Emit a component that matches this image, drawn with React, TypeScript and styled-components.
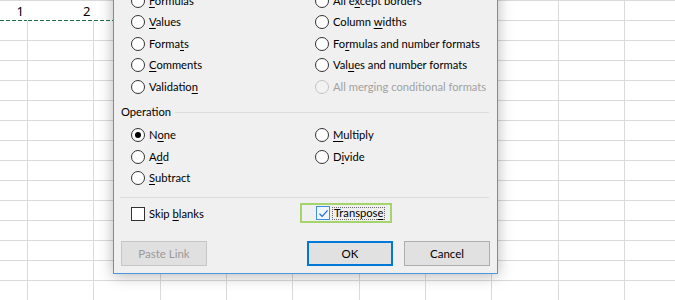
import styled, { createGlobalStyle } from "styled-components";

const GlobalStyle = createGlobalStyle`
  html, body {
    margin: 0;
    padding: 0;
    background: #ffffff;
    overflow: hidden;
  }
  body {
    width: 675px;
    height: 300px;
  }
`;

const COLS = 11;
const ROWS = 15;
const COPY_COLS = 5;

const App = () => {
  const cells = [];
  for (let r = 0; r < ROWS; r++) {
    for (let c = 0; c < COLS; c++) {
      const copy = r === 0 && c < COPY_COLS;
      let value = "";
      if (r === 0 && c === 0) value = "1";
      if (r === 0 && c === 1) value = "2";
      cells.push(
        <Cell key={`${r}-${c}`} $copy={copy}>
          {value}
        </Cell>
      );
    }
  }

  return (
    <Page>
      <GlobalStyle />
      <Sheet>{cells}</Sheet>

      <Dialog>
        <OptionGrid>
          <Option>
            <Radio />
            <Label>
              <Key>F</Key>ormulas
            </Label>
          </Option>
          <Option>
            <Radio />
            <Label>
              All e<Key>x</Key>cept borders
            </Label>
          </Option>
          <Option>
            <Radio />
            <Label>
              <Key>V</Key>alues
            </Label>
          </Option>
          <Option>
            <Radio />
            <Label>
              Column <Key>w</Key>idths
            </Label>
          </Option>
          <Option>
            <Radio />
            <Label>
              Forma<Key>t</Key>s
            </Label>
          </Option>
          <Option>
            <Radio />
            <Label>
              Fo<Key>r</Key>mulas and number formats
            </Label>
          </Option>
          <Option>
            <Radio />
            <Label>
              <Key>C</Key>omments
            </Label>
          </Option>
          <Option>
            <Radio />
            <Label>
              Val<Key>u</Key>es and number formats
            </Label>
          </Option>
          <Option>
            <Radio />
            <Label>
              Validatio<Key>n</Key>
            </Label>
          </Option>
          <Option>
            <Radio $disabled />
            <Label $disabled>All merging conditional formats</Label>
          </Option>
        </OptionGrid>

        <GroupHeader>
          <GroupTitle>Operation</GroupTitle>
          <GroupLine />
        </GroupHeader>

        <OperationGrid>
          <Option>
            <Radio $checked />
            <Label>
              N<Key>o</Key>ne
            </Label>
          </Option>
          <Option>
            <Radio />
            <Label>
              <Key>M</Key>ultiply
            </Label>
          </Option>
          <Option>
            <Radio />
            <Label>
              A<Key>d</Key>d
            </Label>
          </Option>
          <Option>
            <Radio />
            <Label>
              D<Key>i</Key>vide
            </Label>
          </Option>
          <Option>
            <Radio />
            <Label>
              <Key>S</Key>ubtract
            </Label>
          </Option>
        </OperationGrid>

        <Separator />

        <CheckRow>
          <CheckOption>
            <CheckBox />
            <Label>
              Skip <Key>b</Key>lanks
            </Label>
          </CheckOption>
          <Highlight>
            <CheckBox $checked>
              <svg width="11" height="11" viewBox="0 0 11 11">
                <path
                  d="M1.5 5.8 L4.2 8.4 L9.6 2.4"
                  fill="none"
                  stroke="#1a6fc9"
                  strokeWidth="1.2"
                />
              </svg>
            </CheckBox>
            <FocusLabel>
              Transpos<Key>e</Key>
            </FocusLabel>
          </Highlight>
        </CheckRow>

        <ButtonRow>
          <Button disabled>Paste Link</Button>
          <Spacer />
          <Button $default>OK</Button>
          <Button>Cancel</Button>
        </ButtonRow>
      </Dialog>
    </Page>
  );
};

export default App;

const Page = styled.div`
  position: relative;
  width: 675px;
  height: 300px;
  overflow: hidden;
  font-family: Lato, "Noto Sans", sans-serif;
`;

const Sheet = styled.div`
  display: grid;
  grid-template-columns: 28px repeat(10, 66.33px);
  grid-auto-rows: 20px;
  border-top: 1px solid #dadada;
`;

const Cell = styled.div<{ $copy?: boolean }>`
  box-sizing: border-box;
  border-right: 1px solid ${(p) => (p.$copy ? "transparent" : "#dadada")};
  border-bottom: ${(p) => (p.$copy ? "none" : "1px solid #dadada")};
  background: ${(p) =>
    p.$copy
      ? "repeating-linear-gradient(to right, #1f6f43 0 4px, transparent 4px 6px) left bottom / 100% 1px no-repeat"
      : "none"};
  display: flex;
  align-items: flex-end;
  justify-content: flex-end;
  padding: 0 3px 2px 0;
  font-family: "Noto Sans", sans-serif;
  font-size: 13px;
  line-height: 16px;
  color: #000;
`;

const Dialog = styled.div`
  position: absolute;
  left: 113px;
  top: -19px;
  width: 385px;
  box-sizing: border-box;
  border: 1px solid #4a97e0;
  background: #f0f0f0;
  box-shadow: 0 2px 14px rgba(0, 0, 0, 0.28);
  padding: 8px 0 7px;
  display: flex;
  flex-direction: column;
  font-size: 11.2px;
  color: #000;
`;

const OptionGrid = styled.div`
  display: grid;
  grid-template-columns: 184px 1fr;
  grid-auto-rows: 21.5px;
  padding-left: 17px;
`;

const OperationGrid = styled(OptionGrid)`
  margin-top: 4.25px;
`;

const Option = styled.div`
  display: flex;
  align-items: center;
  gap: 4px;
  white-space: nowrap;
`;

const Radio = styled.span<{ $checked?: boolean; $disabled?: boolean }>`
  flex: none;
  width: 14px;
  height: 14px;
  box-sizing: border-box;
  border-radius: 50%;
  border: 1px solid ${(p) => (p.$disabled ? "#c4c4c4" : "#333333")};
  background: ${(p) => (p.$disabled ? "#f2f2f2" : "#ffffff")};
  display: flex;
  align-items: center;
  justify-content: center;

  &::after {
    content: "";
    display: ${(p) => (p.$checked ? "block" : "none")};
    width: 6px;
    height: 6px;
    border-radius: 50%;
    background: #000;
  }
`;

const Label = styled.span<{ $disabled?: boolean }>`
  line-height: 16px;
  color: ${(p) => (p.$disabled ? "#a2a2a2" : "#000")};
`;

const Key = styled.u`
  text-decoration-thickness: 1px;
  text-underline-offset: 2px;
`;

const GroupHeader = styled.div`
  display: flex;
  align-items: center;
  height: 16px;
  margin: 6.5px 8px 0 7px;
  gap: 4px;
`;

const GroupTitle = styled.span`
  line-height: 16px;
`;

const GroupLine = styled.div`
  flex: 1;
  height: 0;
  border-top: 1px solid #dcdcdc;
`;

const Separator = styled.div`
  margin: 8.25px 8px 0 6px;
  border-top: 1px solid #dcdcdc;
`;

const CheckRow = styled.div`
  display: grid;
  grid-template-columns: 184px 1fr;
  height: 20px;
  margin-top: 5px;
  padding-left: 17px;
`;

const CheckOption = styled.div`
  display: flex;
  align-items: center;
  gap: 4px;
  padding-top: 1px;
`;

const CheckBox = styled.span<{ $checked?: boolean }>`
  flex: none;
  width: 14px;
  height: 14px;
  box-sizing: border-box;
  border: 1px solid ${(p) => (p.$checked ? "#3f8fe0" : "#333333")};
  background: ${(p) => (p.$checked ? "#eef5fc" : "#ffffff")};
  display: flex;
  align-items: center;
  justify-content: center;
`;

const Highlight = styled.div`
  margin-left: -15px;
  width: 92px;
  height: 20px;
  box-sizing: border-box;
  border: 2px solid #a5d46c;
  display: flex;
  align-items: center;
  padding-left: 14px;
`;

const FocusLabel = styled.span`
  margin-left: 2px;
  border: 1px dotted #6a6a6a;
  padding: 0 1px;
  line-height: 12px;
  height: 13px;
  box-sizing: border-box;
  display: flex;
  align-items: center;
`;

const ButtonRow = styled.div`
  display: flex;
  gap: 11px;
  margin-top: 18px;
  padding: 0 7px;
`;

const Spacer = styled.div`
  flex: 1;
`;

const Button = styled.button<{ $default?: boolean }>`
  width: 86px;
  height: 25px;
  box-sizing: border-box;
  font-family: inherit;
  font-size: 11.5px;
  color: #000;
  background: #e1e1e1;
  border: 1px solid #adadad;
  box-shadow: ${(p) => (p.$default ? "inset 0 0 0 1px #0078d7" : "none")};
  border-color: ${(p) => (p.$default ? "#0078d7" : "#adadad")};
  padding: 0;

  &:disabled {
    color: #9a9a9a;
    background: #e0e0e0;
    border-color: #c6c6c6;
  }
`;
